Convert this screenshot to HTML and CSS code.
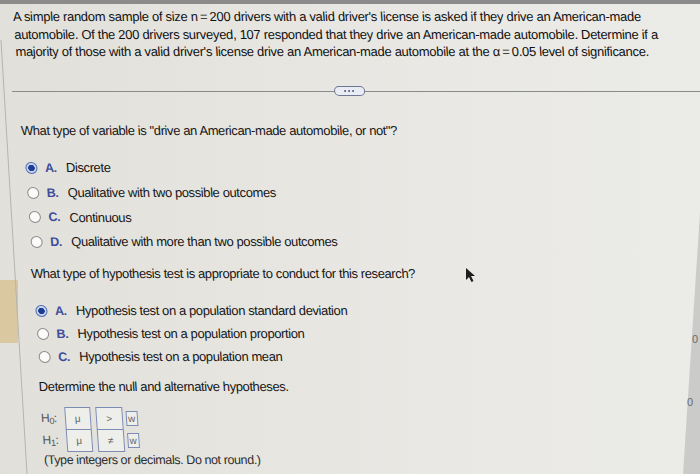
FILE: index.html
```html
<!DOCTYPE html>
<html lang="en">
<head>
    <meta charset="UTF-8">
    <meta name="viewport" content="width=device-width, initial-scale=1.0">
    <title>Hypothesis Test - Question</title>
    <link rel="stylesheet" href="styles.css">
</head>
<body>

    <div class="topbar"></div>

    <!-- Question pane -->
    <main class="screen">
        <p class="prompt">A simple random sample of size n&thinsp;=&thinsp;200 drivers with a valid driver's license is asked if they drive an American-made automobile. Of the 200 drivers surveyed, 107 responded that they drive an American-made automobile. Determine if a majority of those with a valid driver's license drive an American-made automobile at the &alpha;&thinsp;=&thinsp;0.05 level of significance.</p>

        <div class="divider"><span class="more"><i></i><i></i><i></i></span></div>

        <section class="part">
            <p class="question">What type of variable is "drive an American-made automobile, or not"?</p>
            <ul class="choices choices-wide">
                <li class="choice is-selected"><span class="radio"></span><b>A.</b><span>Discrete</span></li>
                <li class="choice"><span class="radio"></span><b>B.</b><span>Qualitative with two possible outcomes</span></li>
                <li class="choice"><span class="radio"></span><b>C.</b><span>Continuous</span></li>
                <li class="choice"><span class="radio"></span><b>D.</b><span>Qualitative with more than two possible outcomes</span></li>
            </ul>
        </section>

        <section class="part part-test">
            <p class="question">What type of hypothesis test is appropriate to conduct for this research?</p>
            <ul class="choices">
                <li class="choice is-selected"><span class="radio"></span><b>A.</b><span>Hypothesis test on a population standard deviation</span></li>
                <li class="choice"><span class="radio"></span><b>B.</b><span>Hypothesis test on a population proportion</span></li>
                <li class="choice"><span class="radio"></span><b>C.</b><span>Hypothesis test on a population mean</span></li>
            </ul>
        </section>

        <section class="part part-hyp">
            <p class="question">Determine the null and alternative hypotheses.</p>
            <div class="hyp">
                <div class="hyp-row">
                    <span class="hyp-label">H<sub>0</sub>:</span>
                    <span class="box box-param">&mu;</span>
                    <span class="box box-sign">&gt;</span>
                    <span class="box box-value">w</span>
                </div>
                <div class="hyp-row">
                    <span class="hyp-label">H<sub>1</sub>:</span>
                    <span class="box box-param">&mu;</span>
                    <span class="box box-sign">&ne;</span>
                    <span class="box box-value">w</span>
                </div>
            </div>
            <p class="note">(Type integers or decimals. Do not round.)</p>
        </section>
    </main>

    <!-- screen edge, pane line, pointer -->
    <svg class="frame" width="700" height="474" viewBox="0 0 700 474">
        <rect x="0" y="280" width="18" height="63" fill="#d9c8a0"/>
        <line x1="1" y1="40" x2="27" y2="474" stroke="#b5b4ae" stroke-width="1"/>
        <polygon points="700,212 683,474 700,474" fill="#cbcbca"/>
        <path d="M466 268 L466 280 L469 277 L471.5 282 L473.5 281 L471 276 L475 276 Z" fill="#1d1d1d"/>
    </svg>
    <span class="edge-digit edge-digit-1">0</span>
    <span class="edge-digit edge-digit-2">0</span>

</body>
</html>
```

FILE: styles.css
```css
/* Page */
body { margin: 0; width: 700px; height: 474px; overflow: hidden; position: relative;
       background: linear-gradient(90deg, #e2e0da, #e9e8e4 60%, #ebebe8);
       font-family: "Liberation Sans", Arial, sans-serif; font-size: 13px; letter-spacing: -0.4px; color: #161616; }
.topbar { height: 4px; background: #8b8b8b; }

/* Question pane, leaning like the photo */
.screen { padding: 4px 0 0 12px; transform: skewX(4deg); transform-origin: 0 0; }
.prompt { margin: 0; width: 672px; line-height: 17.5px; letter-spacing: -0.3px; color: #111; }

.divider { margin: 25px 0 0 -6px; height: 10px; position: relative; display: flex; justify-content: center; align-items: center; width: 690px; }
.divider::before { content: ""; position: absolute; left: 0; right: 0; top: 5px; border-top: 1px solid #8a8a88; }
.more { position: relative; width: 29px; height: 8px; border: 1px solid #6d7894; border-radius: 5px; background: #e9edf3;
        display: flex; justify-content: center; align-items: center; gap: 2px; margin-left: -16px; }
.more i { width: 2px; height: 2px; background: #4d5a7a; border-radius: 50%; }

.part { margin-top: 26px; }
.part-test { margin-top: 11px; }
.part-hyp { margin-top: 10px; }
.question { margin: 0; line-height: 17px; }

/* Choices */
.choices { list-style: none; margin: 17px 0 0; padding: 0; }
.choice { height: 23px; display: flex; align-items: center; }
.choices-wide .choice { height: 24.7px; }
.radio { width: 10px; height: 10px; margin-left: 2px; border: 1px solid #8d8d8d; border-radius: 50%;
         background: radial-gradient(circle, #fbfbfa 55%, #e4e4e2); flex-shrink: 0; }
.is-selected .radio { border-color: #4a69b4; background: radial-gradient(circle, #1f3c8f 0 3px, #cad7f1 3.5px); }
.choice b { width: 21px; margin-left: 7.5px; font-size: 12.5px; color: #3d4d9c; }

/* Hypotheses */
.hyp { margin-top: 11.5px; }
.hyp-row { display: flex; align-items: center; height: 23px; }
.hyp-row + .hyp-row { margin-top: -1px; }
.hyp-label { width: 23.5px; font-size: 12px; color: #555; }
.hyp-label sub { font-size: 9px; vertical-align: -2px; }
.box { box-sizing: border-box; display: flex; justify-content: center; align-items: center;
       border: 1px solid #7d8cb4; background: #eeeeeb; color: #666; font-size: 10px; }
.box-param { width: 26px; height: 23px; }
.box-sign { width: 27px; height: 23px; margin-left: 5px; }
.box-value { width: 12px; height: 15px; margin-left: 3px; font-size: 10px; }
.note { margin: 0; line-height: 16px; font-size: 12.5px; color: #2e2e2e; }

/* Photo frame bits */
.frame { position: absolute; left: 0; top: 0; pointer-events: none; }
.edge-digit { position: absolute; font-size: 11px; color: #6a6a6a; letter-spacing: 0; }
.edge-digit-1 { left: 692px; top: 333px; }
.edge-digit-2 { left: 687px; top: 396px; }
```
